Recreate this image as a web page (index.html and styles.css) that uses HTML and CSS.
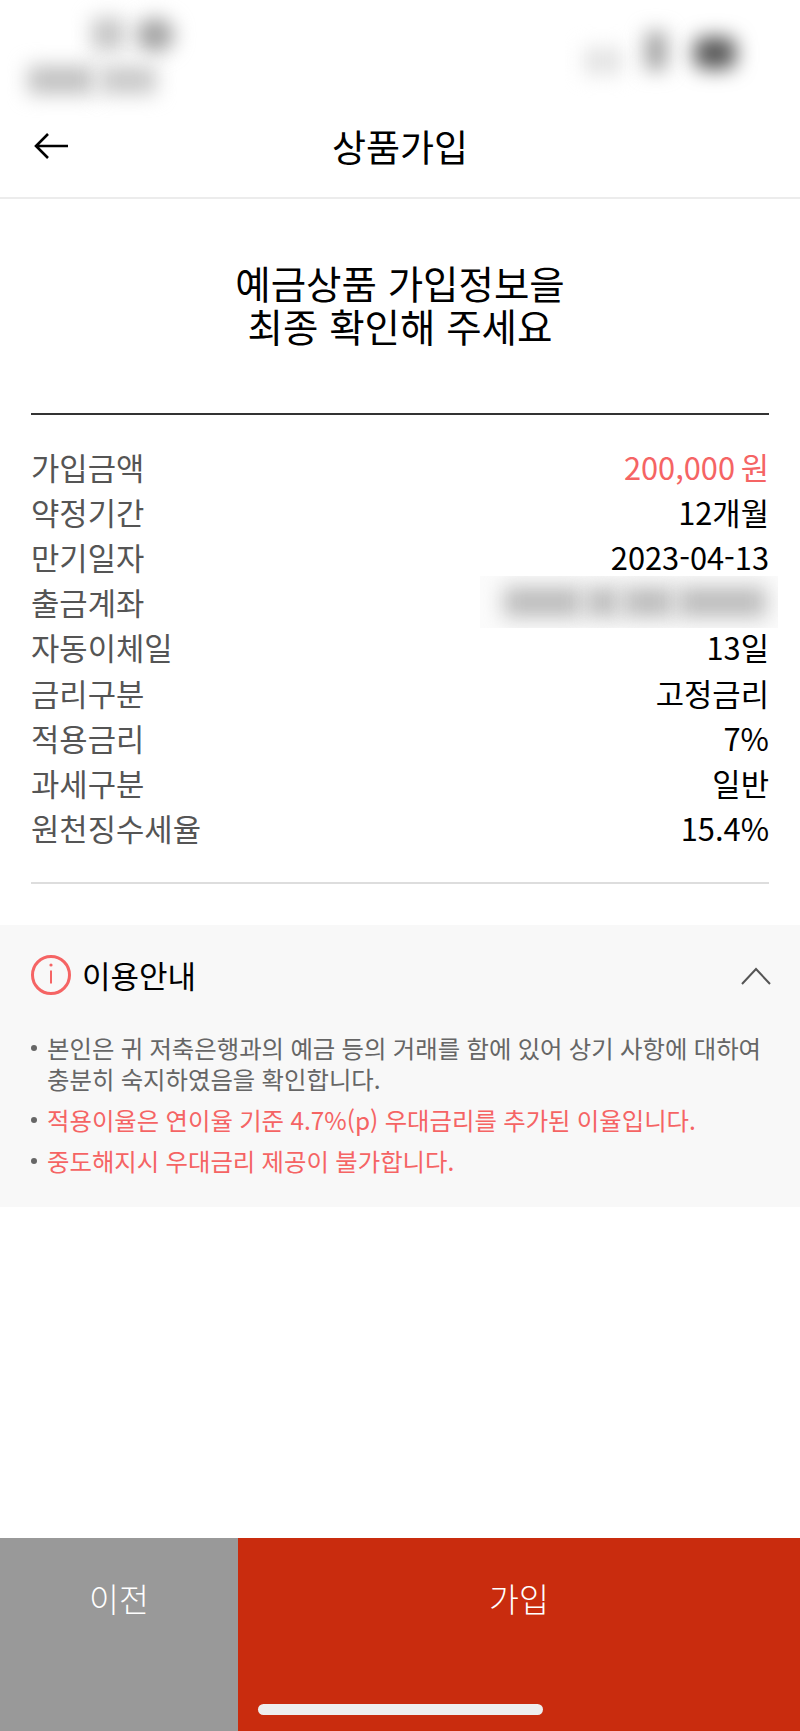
FILE: index.html
```html
<!DOCTYPE html>
<html lang="ko">
<head>
<meta charset="utf-8">
<title>상품가입</title>
<link rel="stylesheet" href="styles.css">
</head>
<body>
<div class="page">
  <div class="status">
    <div class="blob b1"></div><div class="blob b2"></div><div class="blob b3"></div>
    <div class="blob b4"></div><div class="blob b5"></div><div class="blob b6"></div>
    <div class="blob b7"></div>
  </div>
  <header class="top">
    <svg class="back" width="36" height="28" viewBox="0 0 36 28"><path d="M35 14H3M15 2 3 14l12 12" fill="none" stroke="#000" stroke-width="2.600"/></svg>
    <h1>상품가입</h1>
  </header>
  <main class="main">
    <h2>예금상품 가입정보을<br>최종 확인해 주세요</h2>
    <dl class="rows">
      <div class="row"><dt>가입금액</dt><dd class="red">200,000 원</dd></div>
      <div class="row"><dt>약정기간</dt><dd>12개월</dd></div>
      <div class="row"><dt>만기일자</dt><dd>2023-04-13</dd></div>
      <div class="row"><dt>출금계좌</dt><dd class="mask"><span class="m1"></span><span class="m2"></span><span class="m3"></span><span class="m4"></span></dd></div>
      <div class="row"><dt>자동이체일</dt><dd>13일</dd></div>
      <div class="row"><dt>금리구분</dt><dd>고정금리</dd></div>
      <div class="row"><dt>적용금리</dt><dd>7%</dd></div>
      <div class="row"><dt>과세구분</dt><dd>일반</dd></div>
      <div class="row"><dt>원천징수세율</dt><dd>15.4%</dd></div>
    </dl>
  </main>
  <section class="info">
    <div class="info-head">
      <svg width="42" height="42" viewBox="0 0 42 42"><circle cx="21" cy="21" r="18.500" fill="none" stroke="#f56464" stroke-width="3"/><path d="M21 16.500v13" stroke="#f56464" stroke-width="2"/><circle cx="21" cy="11" r="1.600" fill="#f56464"/></svg>
      <h3>이용안내</h3>
      <svg class="chev" width="32" height="20" viewBox="0 0 32 20"><path d="M2 18 16 3l14 15" fill="none" stroke="#555" stroke-width="2"/></svg>
    </div>
    <ul class="notes">
      <li>본인은 귀 저축은행과의 예금 등의 거래를 함에 있어 상기 사항에 대하여 충분히 숙지하였음을 확인합니다.</li>
      <li class="red">적용이율은 연이율 기준 4.7%(p) 우대금리를 추가된 이율입니다.</li>
      <li class="red">중도해지시 우대금리 제공이 불가합니다.</li>
    </ul>
  </section>
  <div class="spacer"></div>
  <footer class="foot">
    <button class="btn prev">이전</button>
    <button class="btn join">가입</button>
    <div class="home"></div>
  </footer>
</div>
</body>
</html>
```
FILE: styles.css
```css
* { box-sizing: border-box; }
html, body { margin: 0; padding: 0; background: #fff; }
body { font-family: "Noto Sans CJK KR", "Noto Sans", sans-serif; color: #000; }
.page { width: 800px; height: 1731px; display: flex; flex-direction: column; overflow: hidden; }
.status { position: relative; height: 96px; flex: none; }
.blob { position: absolute; filter: blur(10px); }
.b1 { left: 92px; top: 18px; width: 32px; height: 32px; background: #c4c4c4; }
.b2 { left: 136px; top: 18px; width: 38px; height: 34px; background: #a0a0a0; border-radius: 50%; }
.b3 { left: 28px; top: 66px; width: 66px; height: 28px; background: #c0c0c0; }
.b4 { left: 100px; top: 66px; width: 56px; height: 28px; background: #c8c8c8; }
.b5 { left: 584px; top: 48px; width: 38px; height: 26px; background: #e2e2e2; }
.b6 { left: 646px; top: 32px; width: 20px; height: 38px; background: #999; }
.b7 { left: 694px; top: 37px; width: 42px; height: 32px; background: #555; border-radius: 10px; }
.top { position: relative; height: 103px; flex: none; display: flex; align-items: center; justify-content: center; border-bottom: 2px solid #ececec; }
.back { position: absolute; left: 33px; top: 36px; }
h1 { margin: 0 0 2px; font-size: 37px; font-weight: 400; line-height: 48px; }
.main { padding: 62px 31px 0; flex: none; }
h2 { margin: 0 0 66px; font-size: 38.500px; font-weight: 400; line-height: 43px; text-align: center; }
.rows { margin: 0; padding: 29px 0 32px; border-top: 2px solid #333; border-bottom: 2px solid #ddd; }
.row { display: flex; justify-content: space-between; align-items: center; height: 45.100px; font-size: 30.800px; line-height: 45px; }
dt { color: #555; }
dd { margin: 0; color: #000; }
dd.red { color: #f56464; word-spacing: -3px; }
.mask { position: relative; width: 298px; height: 52px; margin-right: -9px; background: #fbfbfb; display: flex; align-items: center; gap: 4px; padding: 0 12px 0 24px; overflow: hidden; }
.mask span { height: 30px; background: #bcbcbc; filter: blur(10px); }
.m1 { width: 80px; }
.m2 { width: 34px; background: #d0d0d0; }
.m3 { width: 52px; background: #ccc; }
.m4 { width: 90px; }
.info { margin-top: 41px; height: 282px; background: #f8f8f8; padding: 29px 31px 0; flex: none; }
.info-head { display: flex; align-items: center; height: 42px; gap: 10px; }
.info-head svg { flex: none; margin-left: -1px; }
.info-head .chev { margin-right: -3px; margin-top: 2px; }
h3 { margin: 0; font-size: 31px; font-weight: 400; line-height: 42px; flex: 1; }
.notes { margin: 0; padding: 0; list-style: none; margin-top: 36px; font-size: 24.400px; word-spacing: -0.500px; line-height: 31px; color: #666; }
.notes li { position: relative; padding-left: 16px; margin-bottom: 10px; }
.notes li::before { content: ""; position: absolute; left: 0; top: 13px; width: 6px; height: 6px; border-radius: 50%; background: #666; }
.notes li.red { color: #f56464; }
.spacer { flex: 1; }
.foot { position: relative; height: 193px; flex: none; display: flex; }
.btn { border: 0; padding: 28px 0 0; margin: 0; font: inherit; font-size: 32.500px; font-weight: 300; line-height: 64px; color: #fff; display: flex; justify-content: center; align-items: flex-start; }
.prev { width: 238px; background: #999; }
.join { flex: 1; background: #c92c0e; }
.home { position: absolute; left: 258px; top: 166px; width: 285px; height: 11px; border-radius: 6px; background: #eee; }
```
